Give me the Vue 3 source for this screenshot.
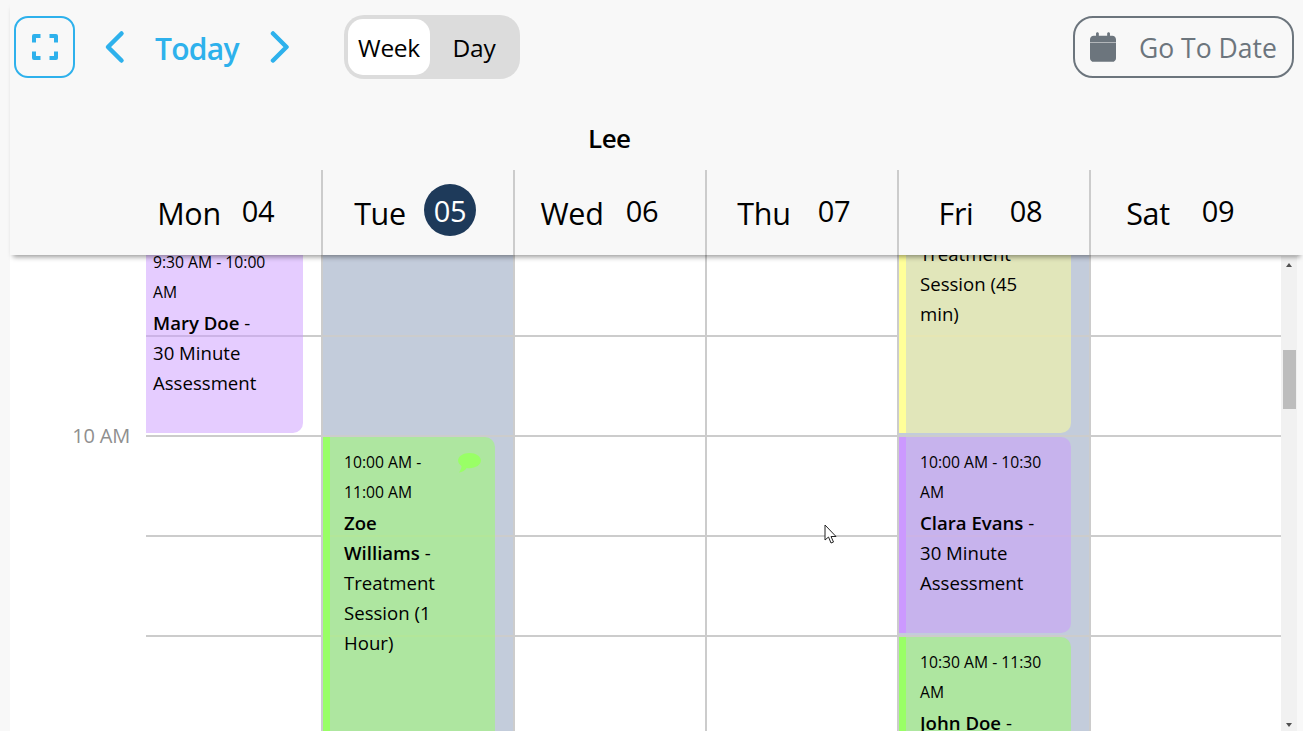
<script setup>
const days = [
  { name: 'Mon', num: '04', first: true, events: [
    { id: 'mary', top: -18, height: 196, tone: 'purple', clipped: true, time: '9:30 AM - 10:00 AM', who: 'Mary Doe', what: '30 Minute Assessment' }
  ] },
  { name: 'Tue', num: '05', today: true, off: true, events: [
    { id: 'zoe', top: 182, height: 400, tone: 'green', narrow: true, note: true, time: '10:00 AM - 11:00 AM', who: 'Zoe Williams', what: 'Treatment Session (1 Hour)' }
  ] },
  { name: 'Wed', num: '06', events: [] },
  { name: 'Thu', num: '07', events: [] },
  { name: 'Fri', num: '08', off: true, events: [
    { id: 'amy', top: -117, height: 295, tone: 'yellow', time: '9:15 AM - 10:00 AM', who: 'Amy Lee', what: 'Treatment Session (45 min)' },
    { id: 'clara', top: 182, height: 196, tone: 'purple', time: '10:00 AM - 10:30 AM', who: 'Clara Evans', what: '30 Minute Assessment' },
    { id: 'john', top: 382, height: 400, tone: 'green', time: '10:30 AM - 11:30 AM', who: 'John Doe', what: 'Treatment Session (1 Hour)' }
  ] },
  { name: 'Sat', num: '09', events: [] }
]
const slots = [1, 2, 3, 4, 5]
</script>

<template>
  <div class="page">
    <header class="head">
      <div class="toolbar">
        <button class="expand" type="button" aria-label="Full screen">
          <svg width="26" height="26" viewBox="0 0 26 26" fill="none" stroke="currentColor" stroke-width="4" stroke-linejoin="round">
            <path d="M2 8.500V2H8.500M17.500 2H24V8.500M24 17.500V24H17.500M8.500 24H2V17.500" />
          </svg>
        </button>
        <button class="nav nav-prev" type="button" aria-label="Previous">
          <svg width="24" height="36" viewBox="0 0 24 36" fill="none" stroke="currentColor" stroke-width="4.500" stroke-linecap="round" stroke-linejoin="round">
            <path d="M18.500 4.500L5 18L18.500 31.500" />
          </svg>
        </button>
        <span class="today-link">Today</span>
        <button class="nav nav-next" type="button" aria-label="Next">
          <svg width="24" height="36" viewBox="0 0 24 36" fill="none" stroke="currentColor" stroke-width="4.500" stroke-linecap="round" stroke-linejoin="round">
            <path d="M3 4.500L16.500 18L3 31.500" />
          </svg>
        </button>
        <div class="toggle">
          <span class="toggle-item active">Week</span>
          <span class="toggle-item">Day</span>
        </div>
        <button class="goto" type="button">
          <svg width="26" height="30" viewBox="0 0 448 512" fill="currentColor">
            <path d="M152 24c0-13-11-24-24-24s-24 11-24 24v40H64C29 64 0 93 0 128v16 48 256c0 35 29 64 64 64h320c35 0 64-29 64-64V192 144 128c0-35-29-64-64-64h-40V24c0-13-11-24-24-24s-24 11-24 24v40H152V24zM0 176h448v8H0z" />
          </svg>
          <span>Go To Date</span>
        </button>
      </div>
      <div class="owner">Lee</div>
      <div class="day-row">
        <div class="corner"></div>
        <div v-for="d in days" :key="d.name" class="day-head" :class="{ first: d.first }">
          <span class="day-name">{{ d.name }}</span>
          <span class="day-num" :class="{ current: d.today }">{{ d.num }}</span>
        </div>
      </div>
    </header>

    <main class="body">
      <div class="gutter"><span class="hour">10 AM</span></div>
      <div v-for="d in days" :key="d.name" class="col" :class="{ first: d.first, off: d.off }">
        <div v-for="s in slots" :key="s" class="slot"></div>
        <article
          v-for="e in d.events"
          :key="e.id"
          class="event"
          :class="[e.tone, { clipped: e.clipped, narrow: e.narrow }]"
          :style="{ top: e.top + 'px', height: e.height + 'px' }"
        >
          <svg v-if="e.note" class="note" width="23" height="20" viewBox="0 0 24 21">
            <path d="M12 0C5.400 0 0 3.600 0 8c0 2.300 1.400 4.300 3.700 5.800C3.400 16 2.200 18.800 1 20.500c3.200-.3 6.500-2.200 8-4.700.9.200 2 .2 3 .2 6.600 0 12-3.600 12-8S18.600 0 12 0z" />
          </svg>
          <div class="time">{{ e.time }}</div>
          <div class="desc"><strong>{{ e.who }}</strong> - {{ e.what }}</div>
        </article>
      </div>
      <div class="scrollbar">
        <span class="arrow up"></span>
        <span class="thumb"></span>
        <span class="arrow down"></span>
      </div>
      <svg class="cursor" width="14" height="21" viewBox="0 0 14 21">
        <path d="M1 1V16L4.500 13L7 19L9.500 18L7 12.500H12Z" fill="#fff" stroke="#222" stroke-width="1" stroke-linejoin="round" />
      </svg>
    </main>
  </div>
</template>

<style>
html, body { margin: 0; background: #f8f8f8; overflow: hidden; }
</style>

<style scoped>
.page {
  width: 1303px;
  height: 731px;
  overflow: hidden;
  display: flex;
  flex-direction: column;
  background: #f8f8f8;
  font-family: "Open Sans", "Noto Sans", sans-serif;
  color: #000;
}
.head {
  position: relative;
  z-index: 5;
  margin-left: 10px;
  height: 255px;
  flex: none;
  background: #f8f8f8;
  box-shadow: 0 5px 5px -3px rgba(0, 0, 0, 0.4);
}
.toolbar {
  display: flex;
  align-items: center;
  height: 94px;
  padding: 0 9px 0 4px;
  box-sizing: border-box;
}
button {
  font: inherit;
  background: none;
  padding: 0;
  border: 0;
}
.expand {
  width: 61px;
  height: 62px;
  box-sizing: border-box;
  border: 2px solid #2eb1ec;
  border-radius: 14px;
  color: #2eb1ec;
  display: flex;
  align-items: center;
  justify-content: center;
}
.nav {
  color: #2eb1ec;
  display: flex;
}
.nav-prev { margin-left: 28px; }
.today-link {
  margin-left: 28px;
  padding-top: 2px;
  width: 87px;
  color: #2eb1ec;
  font-size: 30px;
  font-weight: 600;
  letter-spacing: -0.7px;
  white-space: nowrap;
}
.nav-next { margin-left: 28px; }
.toggle {
  margin-left: 50px;
  width: 176px;
  height: 64px;
  margin-top: -1px;
  box-sizing: border-box;
  padding: 4px;
  border-radius: 20px;
  background: #dcdcdc;
  display: flex;
  align-items: stretch;
}
.toggle-item {
  display: flex;
  align-items: center;
  justify-content: center;
  font-size: 24.500px;
  letter-spacing: -0.3px;
  width: 90px;
  padding: 1px 0 0 2px;
  box-sizing: border-box;
}
.toggle-item.active {
  width: 82px;
  padding-left: 0;
  flex: none;
  background: #fff;
  border-radius: 15px;
}
.goto {
  margin-left: auto;
  width: 221px;
  height: 62px;
  box-sizing: border-box;
  border: 2px solid #6c757d;
  border-radius: 20px;
  color: #6c757d;
  display: flex;
  align-items: center;
  padding-left: 15px;
  font-size: 26.500px;
  white-space: nowrap;
}
.goto span { margin-left: 23px; padding-top: 2px; }
.owner {
  height: 76px;
  box-sizing: border-box;
  padding: 26px 0 0 578px;
  font-size: 26px;
  line-height: 36px;
  font-weight: 600;
  letter-spacing: -0.5px;
}
.day-row {
  display: flex;
  height: 85px;
}
.corner {
  width: 136px;
  flex: none;
}
.day-head {
  width: 192px;
  flex: none;
  box-sizing: border-box;
  border-left: 2px solid #ccc;
  padding: 14px 0 0 13px;
  display: flex;
  align-items: flex-start;
}
.day-head.first {
  width: 175px;
  border-left: 0;
  padding-left: 0;
}
.day-name {
  width: 88px;
  text-align: center;
  font-size: 30.500px;
  line-height: 58px;
  letter-spacing: -0.3px;
}
.day-head.first .day-name { width: 86px; }
.day-num {
  width: 52px;
  height: 52px;
  border-radius: 50%;
  text-align: center;
  font-size: 29px;
  line-height: 53px;
  letter-spacing: -0.4px;
}
.day-num.current {
  background: #1e3a5a;
  color: #fff;
}

.body {
  position: relative;
  flex: 1;
  min-height: 0;
  margin-left: 10px;
  display: flex;
  overflow: hidden;
  background: #fff;
  margin-right: 6px;
}
.gutter {
  width: 136px;
  flex: none;
  box-sizing: border-box;
  padding: 169px 16px 0 0;
  text-align: right;
}
.hour {
  font-size: 20px;
  line-height: 24px;
  color: #8f8f8f;
  letter-spacing: -0.2px;
}
.col {
  position: relative;
  width: 192px;
  flex: none;
  box-sizing: border-box;
  border-left: 2px solid #ccc;
}
.col.first {
  width: 175px;
  border-left: 0;
}
.col.off { background: #c3ccdb; }
.slot {
  height: 98px;
  border-bottom: 2px solid #ccc;
}
.slot:first-child { height: 80px; }
.event {
  position: absolute;
  left: 0;
  width: 172px;
  box-sizing: border-box;
  padding: 10px 22px 0 14px;
  border-left: 7px solid;
  border-bottom-right-radius: 10px;
  border-top-right-radius: 10px;
  font-size: 18.600px;
  line-height: 30px;
  color: #000;
}
.event.clipped {
  width: 157px;
  border-left: 0;
  padding-left: 7px;
  padding-right: 30px;
}
.event.narrow { padding-right: 48px; }
.event.purple { background: rgba(204, 153, 255, 0.5); border-left-color: #cc99ff; }
.event.green { background: rgba(153, 255, 102, 0.5); border-left-color: #99ff66; }
.event.yellow { background: rgba(255, 255, 153, 0.5); border-left-color: #ffff99; }
.time {
  font-size: 15.700px;
  margin-bottom: 1px;
}
.desc strong { font-weight: 600; }
.note {
  position: absolute;
  top: 16px;
  right: 14px;
  fill: #99ff66;
}
.scrollbar {
  flex: 1;
  margin-top: 1px;
  background: #f1f1f1;
  position: relative;
  display: flex;
  flex-direction: column;
  align-items: center;
}
.arrow {
  position: absolute;
  left: 5px;
  width: 0;
  height: 0;
  border-left: 3.500px solid transparent;
  border-right: 3.500px solid transparent;
}
.arrow.up {
  top: 7px;
  border-bottom: 4px solid #505050;
}
.arrow.down {
  bottom: 4px;
  border-top: 4px solid #505050;
}
.thumb {
  margin-top: 94px;
  width: 13px;
  height: 59px;
  background: #bdbdbd;
}
.cursor {
  position: absolute;
  left: 814px;
  top: 269px;
  z-index: 3;
}
</style>
